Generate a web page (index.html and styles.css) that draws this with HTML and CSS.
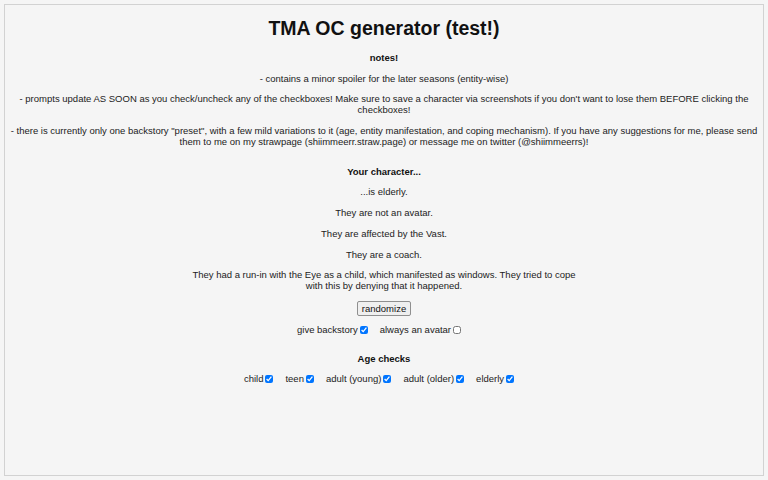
FILE: index.html
```html
<!DOCTYPE html>
<html lang="en">
<head>
    <meta charset="UTF-8">
    <meta name="viewport" content="width=device-width, initial-scale=1.0">
    <title>TMA OC generator (test!)</title>
    <link rel="stylesheet" href="styles.css">
</head>
<body>
    <div class="page">
        <h1>TMA OC generator (test!)</h1>

        <div class="notes">
            <p class="notes-title">notes!</p>
            <p>- contains a minor spoiler for the later seasons (entity-wise)</p>
            <p>- prompts update AS SOON as you check/uncheck any of the checkboxes! Make sure to save a character via screenshots if you don't want to lose them BEFORE clicking the checkboxes!</p>
            <p>- there is currently only one backstory "preset", with a few mild variations to it (age, entity manifestation, and coping mechanism). If you have any suggestions for me, please send them to me on my strawpage (shiimmeerr.straw.page) or message me on twitter (@shiimmeerrs)!</p>
        </div>

        <div class="character">
            <p class="character-title">Your character...</p>
            <p>...is elderly.</p>
            <p>They are not an avatar.</p>
            <p>They are affected by the Vast.</p>
            <p>They are a coach.</p>
            <p>They had a run-in with the Eye as a child, which manifested as windows. They tried to cope with this by denying that it happened.</p>
        </div>

        <button type="button" class="randomize">randomize</button>

        <div class="options">
            <label>give backstory <input type="checkbox" checked></label>
            <label>always an avatar <input type="checkbox"></label>
        </div>

        <p class="section-title">Age checks</p>
        <div class="options age">
            <label>child <input type="checkbox" checked></label>
            <label>teen <input type="checkbox" checked></label>
            <label>adult (young) <input type="checkbox" checked></label>
            <label>adult (older) <input type="checkbox" checked></label>
            <label>elderly <input type="checkbox" checked></label>
        </div>
    </div>
</body>
</html>
```

FILE: styles.css
```css
body {
    margin: 0;
    padding: 4px;
    background-color: #f5f5f5;
    font-family: "Liberation Sans", Arial, sans-serif;
    font-size: 9.5px;
    color: #222;
}
.page {
    height: 472px;
    box-sizing: border-box;
    padding: 1px 3px;
    border: 1px solid #d2d2d2;
    text-align: center;
}
h1 {
    font-size: 19.5px;
    margin: 11px 0 12px;
    color: #111;
}
p {
    margin: 1em 0;
}
.notes-title, .character-title, .section-title {
    font-weight: bold;
    color: #111;
}
.character {
    max-width: 400px;
    margin: 19px auto 0;
}
.character p {
    margin: 9.8px 0;
}
.randomize {
    font-family: inherit;
    font-size: 9.5px;
    padding: 1px 4px;
    height: 15px;
    line-height: 11px;
    background-color: #efefef;
    border: 1px solid #8f8f8f;
    border-radius: 2px;
    color: #111;
}
.options {
    display: flex;
    justify-content: center;
    gap: 12px;
    margin-top: 8px;
    padding-right: 10px;
    line-height: 11px;
}
.options.age {
    margin-top: 9px;
}
.options label {
    display: flex;
    align-items: center;
    gap: 2px;
}
.options input {
    width: 8px;
    height: 8px;
    margin: 0;
}
.section-title {
    margin: 18px 0 0;
}
```
